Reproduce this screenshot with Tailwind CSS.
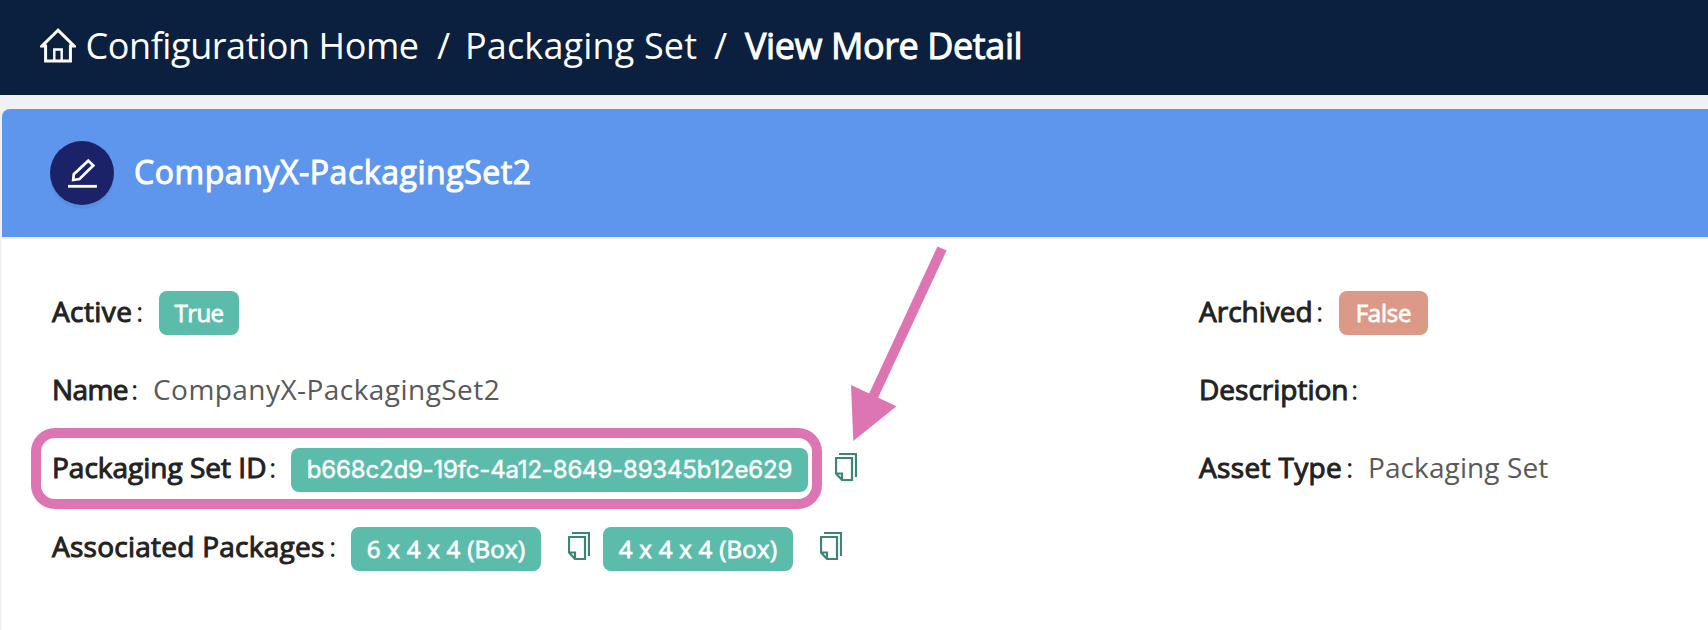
<!DOCTYPE html>
<html lang="en">
<head>
    <meta charset="UTF-8">
    <meta name="viewport" content="width=device-width, initial-scale=1.0">
    <title>View More Detail</title>
    <script src="https://cdn.jsdelivr.net/npm/@tailwindcss/browser@4"></script>
</head>
<body class="relative h-[630px] overflow-hidden bg-[#f0f1f4] font-['Open_Sans',sans-serif] text-[#222]">
    <!-- Icons -->
    <svg class="hidden">
        <symbol id="copy" viewBox="0 0 22 28">
            <path d="M4 1H21V24M1 5H17V27H7L1 20.5ZM1 20.5H7V27" fill="none" stroke="#3b8577" stroke-width="2.2" />
        </symbol>
    </svg>

    <!-- Breadcrumb -->
    <nav class="flex h-[95px] items-center bg-[#0a203e] pb-[3px] pl-10 text-4xl whitespace-nowrap text-white">
        <svg class="mb-px h-[35px] w-9 shrink-0" viewBox="0 0 36 35" fill="none" stroke="currentColor" stroke-width="3">
            <path d="M18 2.2L2 18H5.6V33H30.4V18H34Z" />
            <path d="M14.3 33V21.5H21.7V33" stroke-width="2.4" />
        </svg>
        <a class="w-[361px] pl-[9.5px] tracking-[-0.42px]">Configuration Home</a>
        <span class="w-[28px]">/</span>
        <a class="w-[249px] tracking-[0.15px]">Packaging Set</a>
        <span class="w-[31px]">/</span>
        <span class="tracking-[-0.4px] [-webkit-text-stroke:1px]">View More Detail</span>
    </nav>

    <!-- Detail card -->
    <main class="mt-[14px] ml-0.5 h-[521px] bg-white">
        <div class="bg-[#f0f1f4]">
            <header class="flex h-32 items-center rounded-tl-lg bg-[#5e96ee] pl-12 text-white">
                <div class="flex size-16 items-center justify-center rounded-full bg-[#1c2268] shadow-[0_4px_0_rgba(0,0,0,0.05)]">
                    <svg class="h-[30px] w-[29px]" viewBox="0 0 29 30" fill="none" stroke="currentColor" stroke-width="2.7">
                        <path d="M20.3 2.7L25.3 7.5L11.5 21L5.2 22L5.8 16.2Z" />
                        <path d="M0 28.3H29" stroke-width="2.8" />
                    </svg>
                </div>
                <h1 class="pb-[2px] pl-5 text-[32px] tracking-[0.55px] [-webkit-text-stroke:1px]">CompanyX-PackagingSet2</h1>
            </header>
        </div>

        <div class="flex border-t-2 border-[#f0f0f0] pt-[35px] pl-[50px] text-[28px] whitespace-nowrap">
            <div class="flex w-[1147px] flex-col">
                <div class="flex h-[78.5px] items-center">
                    <span class="w-[84px] pb-1 tracking-[0.4px] [-webkit-text-stroke:1px]">Active</span>
                    <span class="w-[23px] pb-1">:</span>
                    <span class="flex h-11 w-20 items-center justify-center rounded-lg bg-[#5bbcab] text-2xl tracking-[-0.6px] text-white [-webkit-text-stroke:0.8px]">True</span>
                </div>
                <div class="flex h-[78.5px] items-center">
                    <span class="w-[79px] pb-[6px] tracking-[-0.6px] [-webkit-text-stroke:1px]">Name</span>
                    <span class="w-[22px] pb-[6px]">:</span>
                    <span class="pb-[6px] tracking-[0.45px] text-[#595959]">CompanyX-PackagingSet2</span>
                </div>
                <div class="flex h-[78.5px] items-center">
                    <span class="w-[217px] pb-[6px] [-webkit-text-stroke:1px]">Packaging Set ID</span>
                    <span class="w-[22px] pb-[6px]">:</span>
                    <span class="flex h-11 w-[517px] items-center justify-center rounded-lg bg-[#5bbcab] font-['Inter',sans-serif] text-2xl tracking-[-0.18px] text-white [-webkit-text-stroke:0.5px]">b668c2d9-19fc-4a12-8649-89345b12e629</span>
                    <svg class="mb-[6px] ml-[27px] h-7 w-[22px]"><use href="#copy" /></svg>
                </div>
                <div class="flex h-[78.5px] items-center">
                    <span class="w-[277px] pb-[6px] tracking-[0.25px] [-webkit-text-stroke:1px]">Associated Packages</span>
                    <span class="w-[22px] pb-[6px]">:</span>
                    <span class="flex h-11 w-[190px] items-center justify-center rounded-lg bg-[#5bbcab] text-2xl tracking-[0.3px] text-white [-webkit-text-stroke:0.8px]">6 x 4 x 4 (Box)</span>
                    <svg class="mb-[6px] ml-[27px] h-7 w-[22px]"><use href="#copy" /></svg>
                    <span class="ml-[13px] flex h-11 w-[190px] items-center justify-center rounded-lg bg-[#5bbcab] text-2xl tracking-[0.3px] text-white [-webkit-text-stroke:0.8px]">4 x 4 x 4 (Box)</span>
                    <svg class="mb-[6px] ml-[27px] h-7 w-[22px]"><use href="#copy" /></svg>
                </div>
            </div>
            <div class="flex flex-col">
                <div class="flex h-[78.5px] items-center">
                    <span class="w-[117px] pb-1 [-webkit-text-stroke:1px]">Archived</span>
                    <span class="w-[23px] pb-1">:</span>
                    <span class="flex h-11 w-[89px] items-center justify-center rounded-lg bg-[#dc9987] text-2xl tracking-[-0.2px] text-white [-webkit-text-stroke:0.8px]">False</span>
                </div>
                <div class="flex h-[78.5px] items-center">
                    <span class="w-[152px] pb-[6px] [-webkit-text-stroke:1px]">Description</span>
                    <span class="pb-[6px]">:</span>
                </div>
                <div class="flex h-[78.5px] items-center">
                    <span class="w-[147px] pb-[6px] tracking-[0.35px] [-webkit-text-stroke:1px]">Asset Type</span>
                    <span class="w-[22px] pb-[6px]">:</span>
                    <span class="pb-[6px] tracking-[0.1px] text-[#595959]">Packaging Set</span>
                </div>
            </div>
        </div>
    </main>

    <!-- Highlight ring and arrow over the ID row -->
    <div class="absolute top-[428px] left-[31px] h-[81px] w-[791px] rounded-3xl border-10 border-[#dd75b2]"></div>
    <svg class="absolute top-[240px] left-[840px] h-[210px] w-[120px]" viewBox="840 240 120 210">
        <path d="M942 248.5L873 397" stroke="#dd75b2" stroke-width="10" />
        <path d="M851 385L896.5 406.3L853.3 441Z" fill="#dd75b2" />
    </svg>
</body>
</html>
